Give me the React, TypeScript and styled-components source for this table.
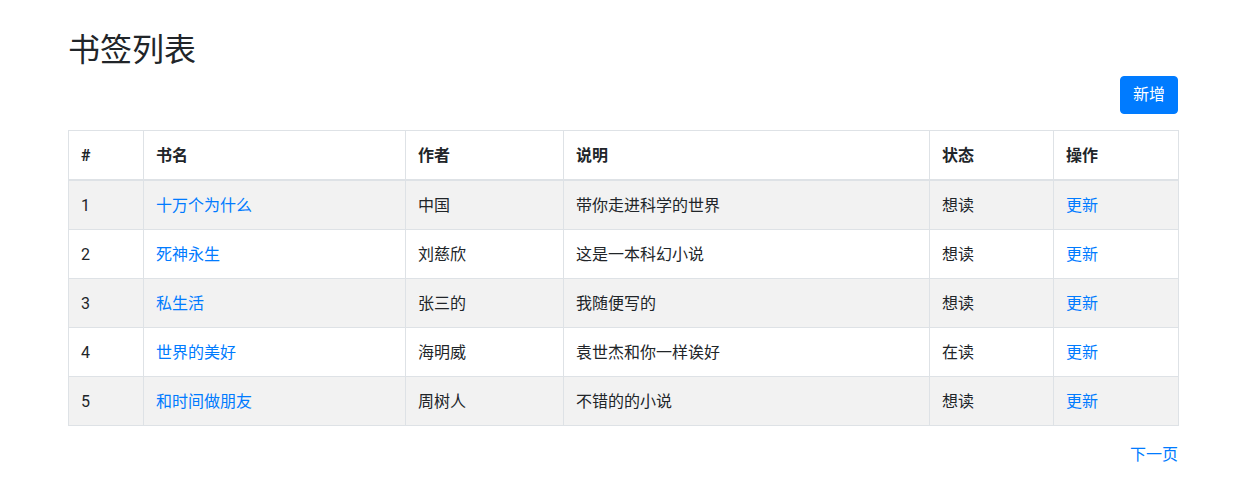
import React from "react";
import styled, { createGlobalStyle } from "styled-components";

const Global = createGlobalStyle`
  html, body { margin: 0; padding: 0; background: #fff; }
  body {
    font-family: Roboto, "Noto Sans CJK SC", "Noto Sans", sans-serif;
    font-size: 16px;
    line-height: 1.5;
    color: #212529;
  }
`;

const Container = styled.div`
  width: 1110px;
  padding: 31px 0 0 68px;
`;

const Title = styled.h2`
  margin: 0 0 7px;
  font-size: 32px;
  font-weight: 400;
  line-height: 1.2;
  color: #212529;
`;

const Toolbar = styled.div`
  display: flex;
  justify-content: flex-end;
  margin-bottom: 16px;
`;

const Button = styled.button`
  font-family: inherit;
  font-size: 16px;
  line-height: 1.5;
  padding: 6px 12px;
  color: #fff;
  background: #007bff;
  border: 1px solid #007bff;
  border-radius: 4px;
  cursor: pointer;
`;

const Table = styled.table`
  width: 1110px;
  table-layout: fixed;
  border-collapse: collapse;
  border: 1px solid #dee2e6;
`;

const Th = styled.th<{ $w: number }>`
  box-sizing: border-box;
  width: ${(p) => p.$w}px;
  text-align: left;
  font-weight: 700;
  padding: 13px 12px 11px;
  border: 1px solid #dee2e6;
  border-bottom-width: 2px;
  vertical-align: bottom;
`;

const Tr = styled.tr`
  &:nth-child(odd) { background: rgba(0, 0, 0, 0.05); }
`;

const Td = styled.td`
  padding: 13px 12px 11px;
  border: 1px solid #dee2e6;
`;

const Link = styled.a`
  color: #007bff;
  text-decoration: none;
  cursor: pointer;
`;

const Pager = styled.div`
  display: flex;
  justify-content: flex-end;
  margin-top: 17px;
`;

const cols = [
  { t: "#", w: 75 },
  { t: "书名", w: 262 },
  { t: "作者", w: 158 },
  { t: "说明", w: 366 },
  { t: "状态", w: 124 },
  { t: "操作", w: 125 },
];

const rows = [
  ["1", "十万个为什么", "中国", "带你走进科学的世界", "想读"],
  ["2", "死神永生", "刘慈欣", "这是一本科幻小说", "想读"],
  ["3", "私生活", "张三的", "我随便写的", "想读"],
  ["4", "世界的美好", "海明威", "袁世杰和你一样诶好", "在读"],
  ["5", "和时间做朋友", "周树人", "不错的的小说", "想读"],
];

export default function App() {
  return (
    <>
      <Global />
      <Container>
        <Title>书签列表</Title>
        <Toolbar>
          <Button>新增</Button>
        </Toolbar>
        <Table>
          <thead>
            <tr>
              {cols.map((c) => (
                <Th key={c.t} $w={c.w}>{c.t}</Th>
              ))}
            </tr>
          </thead>
          <tbody>
            {rows.map((r) => (
              <Tr key={r[0]}>
                <Td>{r[0]}</Td>
                <Td><Link>{r[1]}</Link></Td>
                <Td>{r[2]}</Td>
                <Td>{r[3]}</Td>
                <Td>{r[4]}</Td>
                <Td><Link>更新</Link></Td>
              </Tr>
            ))}
          </tbody>
        </Table>
        <Pager>
          <Link>下一页</Link>
        </Pager>
      </Container>
    </>
  );
}
